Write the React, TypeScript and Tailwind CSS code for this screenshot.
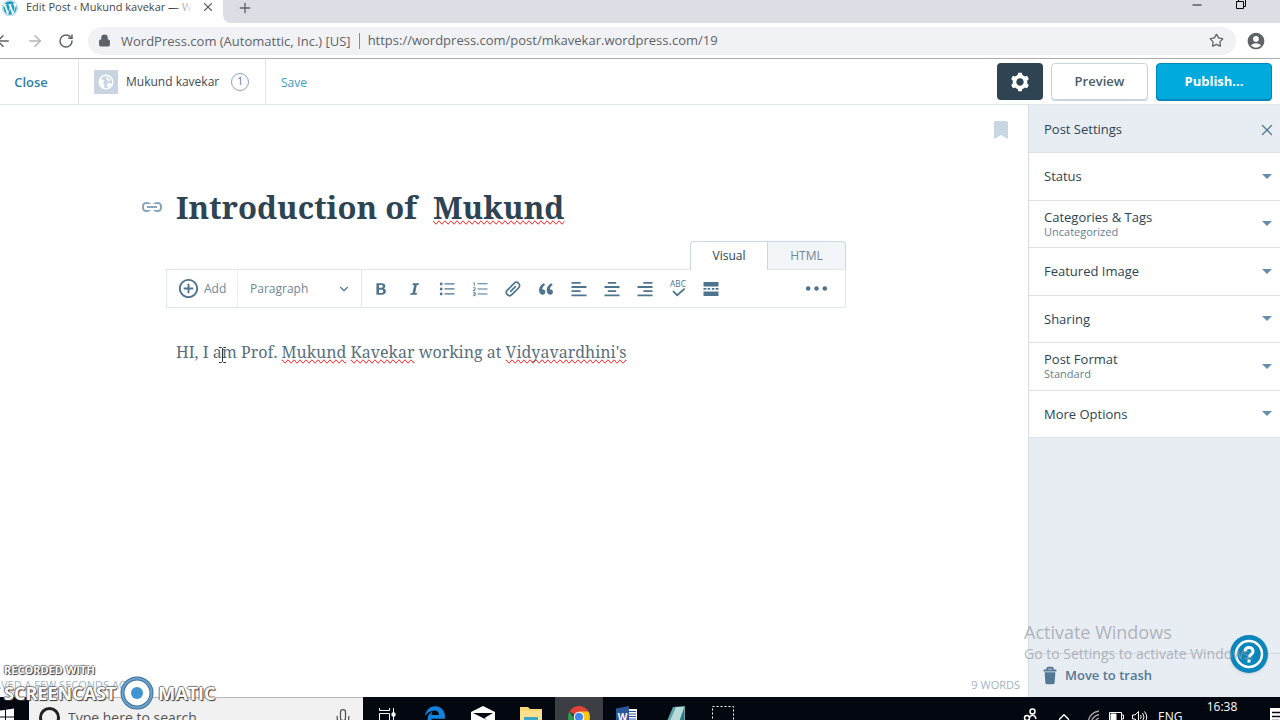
import { useState } from 'react';
import type { ReactNode } from 'react';
import {
  ArrowLeft,
  ArrowRight,
  ChevronDown,
  ChevronUp,
  Lock,
  Mic,
  Minus,
  Plus,
  RotateCw,
  Star,
  X,
} from 'lucide-react';
import { FaEdgeLegacy, FaWordpress } from 'react-icons/fa';
import { MdAccountCircle } from 'react-icons/md';

interface Section {
  title: string;
  value?: string;
}

const sections: Section[] = [
  { title: 'Status' },
  { title: 'Categories & Tags', value: 'Uncategorized' },
  { title: 'Featured Image' },
  { title: 'Sharing' },
  { title: 'Post Format', value: 'Standard' },
  { title: 'More Options' },
];

const QUOTE =
  'M11.192 15.757c0-.88-.23-1.618-.69-2.217-.326-.412-.768-.683-1.327-.812-.55-.128-1.07-.137-1.54-.028-.16-.95.1-1.956.76-3.022.66-1.065 1.515-1.867 2.558-2.403L9.373 5c-.8.396-1.56.898-2.26 1.505-.71.607-1.34 1.305-1.9 2.094s-.98 1.68-1.25 2.69-.346 2.04-.217 3.1c.168 1.4.62 2.52 1.356 3.35.735.84 1.652 1.26 2.748 1.26.965 0 1.766-.29 2.4-.878.628-.576.94-1.365.94-2.368z';

function Gridicon({ size = 20, children }: { size?: number; children: ReactNode }) {
  return (
    <svg width={size} height={size} viewBox="0 0 24 24" fill="currentColor" aria-hidden="true">
      {children}
    </svg>
  );
}

function Misspelled({ children }: { children: ReactNode }) {
  return <span className="[text-decoration-line:spelling-error]">{children}</span>;
}

const tools: { label: string; icon: ReactNode }[] = [
  {
    label: 'Bold',
    icon: (
      <Gridicon>
        <path
          fillRule="evenodd"
          d="M6.5 5H13c2.6 0 4.2 1.2 4.2 3.4 0 1.5-.8 2.6-2.2 3 1.8.3 2.9 1.6 2.9 3.4 0 2.6-1.9 4.2-4.9 4.2H6.5zM9.6 7.3v3.3h2.7c1.2 0 1.8-.6 1.8-1.7s-.6-1.6-1.8-1.6zm0 5.500v3.9h2.9c1.4 0 2.2-.7 2.2-2s-.8-1.9-2.2-1.9z"
        />
      </Gridicon>
    ),
  },
  {
    label: 'Italic',
    icon: (
      <Gridicon>
        <path d="M10.5 5H18l-.4 2.2h-2.2l-2 9.6h2.2l-.4 2.2H7.5l.4-2.2h2.3l2-9.6H10z" />
      </Gridicon>
    ),
  },
  {
    label: 'Bulleted list',
    icon: (
      <Gridicon>
        <path d="M9 18.500h12v-1.400H9zm0-6h12v-1.400H9zm0-7.400v1.400h12V5.100z" />
        <circle cx="5" cy="6" r="1.700" />
        <circle cx="5" cy="12" r="1.700" />
        <circle cx="5" cy="18" r="1.700" />
      </Gridicon>
    ),
  },
  {
    label: 'Numbered list',
    icon: (
      <Gridicon>
        <path d="M9 18.500h12v-1.200H9zm0-6h12v-1.200H9zm0-7.400v1.200h12V5.100z" />
        <path
          d="M4 4.500h1.200v4M3.800 10.500h2.400v1.500l-2.200 1.800h2.400M3.800 16h2.400v4H3.800m0-2h2.400"
          fill="none"
          stroke="currentColor"
          strokeWidth="1"
        />
      </Gridicon>
    ),
  },
  {
    label: 'Insert link',
    icon: (
      <Gridicon>
        <g
          fill="none"
          stroke="currentColor"
          strokeWidth="2"
          strokeLinecap="round"
          transform="rotate(-45 12 12)"
        >
          <path d="M12.500 8.200H6.200a3.800 3.800 0 0 0 0 7.600h4.800" />
          <path d="M11.500 15.800h6.300a3.800 3.800 0 0 0 0-7.600H13" />
          <path d="M8 12h8" />
        </g>
      </Gridicon>
    ),
  },
  {
    label: 'Blockquote',
    icon: (
      <Gridicon>
        <path d={QUOTE} />
        <path d={QUOTE} transform="translate(9.124 0)" />
      </Gridicon>
    ),
  },
  {
    label: 'Align left',
    icon: (
      <Gridicon>
        <path d="M3 3.500h11v2.200H3zm0 5h18v2.200H3zm0 5h11v2.200H3zm0 5h18v2.200H3z" />
      </Gridicon>
    ),
  },
  {
    label: 'Align center',
    icon: (
      <Gridicon>
        <path d="M7 3.500h10v2.200H7zm-4 5h18v2.200H3zm4 5h10v2.200H7zm-4 5h18v2.200H3z" />
      </Gridicon>
    ),
  },
  {
    label: 'Align right',
    icon: (
      <Gridicon>
        <path d="M10 3.500h11v2.200H10zm-7 5h18v2.200H3zm7 5h11v2.200H10zm-7 5h18v2.200H3z" />
      </Gridicon>
    ),
  },
  {
    label: 'Proofread writing',
    icon: (
      <Gridicon>
        <text x="12" y="9" textAnchor="middle" fontSize="10">
          ABC
        </text>
        <path d="m6 14.500 5 5 9-8" fill="none" stroke="currentColor" strokeWidth="2.200" />
      </Gridicon>
    ),
  },
  {
    label: 'Insert read more',
    icon: (
      <Gridicon>
        <path d="M3 3.500h18v5.500H3zm0 7.300h3.500v2H3zm5 0h3v2H8zm5 0h3v2h-3zm4.500 0H21v2h-3.500zM3 15h18v5.500H3z" />
      </Gridicon>
    ),
  },
];

function BrowserChrome() {
  return (
    <header className="shrink-0 border-b border-[#a9abae] bg-white text-[#5f6368]">
      <div className="flex h-[23px] items-end justify-between bg-[#dcdee5]">
        <div className="flex h-full">
          <div className="flex w-[223px] items-start gap-2 overflow-hidden bg-white pl-0.5">
            <FaWordpress size={16} className="shrink-0 text-[#1e9cc4]" />
            <div className="relative h-4 min-w-0 flex-1 text-[11px] leading-3.5 whitespace-nowrap text-[#45484c]">
              Edit Post ‹ Mukund kavekar — W
              <div className="absolute inset-y-0 right-0 w-5 bg-linear-to-r from-transparent to-white" />
            </div>
            <button aria-label="Close tab" className="mr-2 shrink-0">
              <X size={14} />
            </button>
          </div>
          <div className="h-full bg-white">
            <button
              aria-label="New tab"
              className="flex h-full w-11 items-start justify-center rounded-bl-lg bg-[#dcdee5]"
            >
              <Plus size={16} />
            </button>
          </div>
        </div>
        <div className="flex h-full items-start gap-8 pr-8.5 text-black">
          <button aria-label="Minimize">
            <Minus size={14} strokeWidth={1.5} className="-mt-0.5" />
          </button>
          <button aria-label="Restore">
            <svg width="10" height="10" viewBox="0 0 10 10" fill="none" stroke="currentColor">
              <path d="M.5 1.500h7v7h-7zM2.500 1.500v-2h7v7h-2" />
            </svg>
          </button>
        </div>
      </div>
      <div className="flex h-[35px] items-center">
        <button aria-label="Back" className="w-5 overflow-hidden">
          <ArrowLeft size={18} className="-ml-1.5" />
        </button>
        <button aria-label="Forward" className="ml-1.5 text-[#b4b6b9]">
          <ArrowRight size={18} />
        </button>
        <button aria-label="Reload" className="ml-3.5">
          <RotateCw size={16} strokeWidth={2.2} />
        </button>
        <div className="ml-3.5 flex h-7 flex-1 items-center rounded-full bg-[#f1f2f5] pr-3 pl-2.5 text-[13px]">
          <Lock size={13} fill="currentColor" className="shrink-0" />
          <span className="ml-2.5 border-r border-[#8a8d91] pr-2 leading-4 whitespace-nowrap">
            WordPress.com (Automattic, Inc.) [US]
          </span>
          <input
            aria-label="Address"
            className="ml-2 min-w-0 flex-1 bg-transparent outline-none"
            defaultValue="https://wordpress.com/post/mkavekar.wordpress.com/19"
          />
          <button aria-label="Bookmark this page">
            <Star size={15} />
          </button>
        </div>
        <button aria-label="Profile" className="mr-3.5 ml-2.5">
          <MdAccountCircle size={20} />
        </button>
      </div>
    </header>
  );
}

function EditorHeader() {
  return (
    <div className="flex h-[46px] shrink-0 items-stretch border-b border-[#dfe6ec] text-[13px]">
      <button className="w-[79px] border-r border-[#dfe6ec] pt-0.5 pr-4 font-semibold text-[#2e7fa8]">
        Close
      </button>
      <a
        href="#site"
        className="flex w-[187px] items-center border-r border-[#dfe6ec] pl-[15px] text-xs text-[#3d4a55]"
      >
        <span className="flex size-6 items-center justify-center bg-[#c8d4df] text-white">
          <Gridicon size={18}>
            <circle cx="12" cy="12" r="9" fill="none" stroke="currentColor" strokeWidth="2" />
            <path d="M4 8c3 0 5 1 6 3l-2 2 2 3-1 4c-4-2-6-7-5-12zm9-5 1 4 4 1-1 3-3-1-2-3zM15 13l4 1-1 4-4 1-1-3z" />
          </Gridicon>
        </span>
        <span className="ml-2 whitespace-nowrap">Mukund kavekar</span>
        <span className="ml-3 flex size-[18px] items-center justify-center rounded-full border border-[#87a6bc] text-[11px] text-[#5b7a90]">
          1
        </span>
      </a>
      <button className="px-[15px] pt-0.5 text-xs text-[#3a9dc4]">Save</button>
      <div className="ml-auto flex items-center gap-2 pr-2">
        <button
          aria-label="Post settings"
          className="flex h-[37px] w-[46px] items-center justify-center rounded bg-[#2e4453] text-white"
        >
          <Gridicon size={22}>
            <path d="M20 12c0-.568-.06-1.122-.174-1.656l1.834-1.612-2-3.464-2.322.786c-.82-.736-1.787-1.308-2.86-1.657L14 2h-4l-.48 2.396c-1.070.35-2.040.92-2.858 1.657L4.340 5.268l-2 3.464 1.834 1.612C4.060 10.878 4 11.432 4 12s.06 1.122.174 1.656L2.340 15.268l2 3.464 2.322-.786c.82.736 1.787 1.308 2.860 1.657L10 22h4l.48-2.396c1.070-.35 2.038-.92 2.858-1.657l2.322.786 2-3.464-1.834-1.613c.113-.535.174-1.090.174-1.656zm-8 4c-2.210 0-4-1.790-4-4s1.790-4 4-4 4 1.790 4 4-1.790 4-4 4z" />
          </Gridicon>
        </button>
        <button className="h-[37px] w-[97px] rounded border border-[#c8d3dc] font-semibold text-[#4a5b68] shadow-[0_1px_0_#c8d3dc]">
          Preview
        </button>
        <button className="h-[37px] w-[116px] rounded border border-[#0087be] bg-[#00aadc] font-bold text-white shadow-[0_1px_0_#0087be]">
          Publish...
        </button>
      </div>
    </div>
  );
}

function Editor() {
  const [mode, setMode] = useState<'visual' | 'html'>('visual');

  return (
    <main className="relative flex min-w-0 flex-1 flex-col">
      <button aria-label="Stick to front page" className="mt-4 mr-5 self-end text-[#c8d7e1]">
        <svg width="14" height="18" viewBox="0 0 14 18" fill="currentColor">
          <path d="M1.500 0h11A1.500 1.500 0 0 1 14 1.500V18l-7-4-7 4V1.500A1.500 1.500 0 0 1 1.500 0z" />
        </svg>
      </button>

      <div className="w-full flex-1 pr-4">
        <div className="mx-auto w-full max-w-[680px]">
          <div className="relative mt-11 px-2.5">
            <button
              aria-label="Edit permalink"
              className="absolute top-3 right-full mr-0.5 text-[#87a6bc]"
            >
              <Gridicon size={24}>
                <path d="M17 13H7v-2h10v2zm1-6h-1c-1.630 0-3.065.792-3.977 2H18c1.103 0 2 .897 2 2v2c0 1.103-.897 2-2 2h-4.977c.913 1.208 2.347 2 3.977 2h1c2.210 0 4-1.790 4-4v-2c0-2.210-1.790-4-4-4zM2 11v2c0 2.210 1.790 4 4 4h1c1.630 0 3.065-.792 3.977-2H6c-1.103 0-2-.897-2-2v-2c0-1.103.897-2 2-2h4.977C10.065 7.792 8.630 7 7 7H6c-2.210 0-4 1.790-4 4z" />
              </Gridicon>
            </button>
            <h1
              contentEditable
              suppressContentEditableWarning
              spellCheck={false}
              className="font-['Noto_Serif',serif] text-[31px] leading-12 font-bold whitespace-pre-wrap text-[#2e4453] outline-none"
            >
              Introduction of{'  '}
              <Misspelled>Mukund</Misspelled>
            </h1>
          </div>

          <div className="mt-2.5 flex justify-end text-xs" role="tablist">
            <button
              role="tab"
              aria-selected={mode === 'visual'}
              onClick={() => setMode('visual')}
              className="z-10 -mb-px h-[29px] w-[78px] rounded-tl border border-b-0 border-[#c8d7e1] bg-white text-[#2e4453]"
            >
              Visual
            </button>
            <button
              role="tab"
              aria-selected={mode === 'html'}
              onClick={() => setMode('html')}
              className="h-7 w-[78px] rounded-tr border border-b-0 border-l-0 border-[#c8d7e1] bg-[#f3f6f8] text-[#6f8796]"
            >
              HTML
            </button>
          </div>
          <div className="flex h-[39px] items-stretch border border-[#dfe6ec] text-xs text-[#4f748e]">
            <button className="flex w-[71px] items-center gap-1 border-r border-[#e9eff3] pl-2.5 text-[#6f8796]">
              <Gridicon size={23}>
                <path
                  className="text-[#4f748e]"
                  fill="currentColor"
                  d="M12 4c4.410 0 8 3.590 8 8s-3.590 8-8 8-8-3.590-8-8 3.590-8 8-8m0-2C6.477 2 2 6.477 2 12s4.477 10 10 10 10-4.477 10-10S17.523 2 12 2zm5 9h-4V7h-2v4H7v2h4v4h2v-4h4v-2z"
                />
              </Gridicon>
              Add
            </button>
            <div className="relative flex w-[124px] items-center border-r border-[#dfe6ec]">
              <select
                aria-label="Text style"
                className="h-full w-full appearance-none bg-transparent pl-3 text-[#6f8796] outline-none"
              >
                <option>Paragraph</option>
                <option>Heading 1</option>
                <option>Heading 2</option>
              </select>
              <ChevronDown size={14} className="pointer-events-none absolute right-2.5" />
            </div>
            <div className="flex flex-1 items-center pl-0.5">
              {tools.map((tool) => (
                <button
                  key={tool.label}
                  aria-label={tool.label}
                  className="flex h-full w-[33px] items-center justify-center"
                >
                  {tool.icon}
                </button>
              ))}
              <button aria-label="More" className="mr-4 ml-auto">
                <Gridicon size={25}>
                  <circle cx="4" cy="12" r="2.200" />
                  <circle cx="12" cy="12" r="2.200" />
                  <circle cx="20" cy="12" r="2.200" />
                </Gridicon>
              </button>
            </div>
          </div>

          <div
            role="textbox"
            aria-label="Post content"
            contentEditable
            suppressContentEditableWarning
            spellCheck={false}
            className="mt-7 px-2.5 font-['Noto_Serif',serif] text-base leading-8 text-[#596f7d] outline-none"
          >
            HI, I am Prof. <Misspelled>Mukund</Misspelled> <Misspelled>Kavekar</Misspelled> working
            at <Misspelled>Vidyavardhini's</Misspelled>
          </div>
        </div>
      </div>

      {/* Text cursor */}
      <svg
        className="pointer-events-none absolute top-[242px] left-[218px]"
        width="9"
        height="16"
        viewBox="0 0 9 16"
        fill="none"
        stroke="#333"
        aria-hidden="true"
      >
        <path d="M1 .5h2.500l1 1 1-1H8M4.500 1.500v13M1 15.500h2.500l1-1 1 1H8" />
      </svg>

      <div className="flex items-center justify-between pr-2 pb-1 text-[11px] leading-4 text-[#a0b3c2]">
        <span className="-ml-3">SAVED A FEW SECONDS AGO</span>
        <span>9 WORDS</span>
      </div>
    </main>
  );
}

function Sidebar() {
  return (
    <aside className="flex w-[252px] shrink-0 flex-col border-l border-[#d5dee6] bg-[#e8ecf3] text-[13px] text-[#2e4453]">
      <div className="flex h-[47px] items-center justify-between pt-0.5 pr-1 pl-[15px]">
        <h2>Post Settings</h2>
        <button aria-label="Close settings" className="text-[#4f748e]">
          <X size={18} strokeWidth={1.6} />
        </button>
      </div>
      <div className="grid h-[286px] grid-rows-6 border-b border-[#dfe3e8]">
        {sections.map((section) => (
          <button
            key={section.title}
            className="flex items-center justify-between border-t border-[#dfe3e8] bg-white pr-2 pl-[15px] text-left"
          >
            <span className="leading-4">
              <span className="block font-medium">{section.title}</span>
              {section.value && (
                <span className="block text-[11px] leading-3.5 text-[#668090]">{section.value}</span>
              )}
            </span>
            <svg width="10" height="5" viewBox="0 0 10 5" fill="#668eaa" aria-hidden="true">
              <path d="M0 0h10L5 5z" />
            </svg>
          </button>
        ))}
      </div>
      <div className="mt-auto border-t border-[#cfd8e0]">
        <button className="flex h-[43px] items-center gap-1 pl-2.5 font-semibold text-[#537994]">
          <Gridicon size={22}>
            <path d="M6.187 8h11.625l-.695 11.125C17.050 20.180 16.177 21 15.120 21H8.880c-1.057 0-1.930-.82-1.997-1.875L6.187 8zM19 5v2H5V5h3V4c0-1.105.895-2 2-2h4c1.105 0 2 .895 2 2v1h3zm-9 0h4V4h-4v1z" />
          </Gridicon>
          Move to trash
        </button>
      </div>
    </aside>
  );
}

function TaskIcon({ label, active, children }: { label: string; active?: boolean; children: ReactNode }) {
  return (
    <button
      aria-label={label}
      className={`flex h-10 w-12 shrink-0 items-center justify-center ${active ? 'bg-[#3b3e43]' : ''}`}
    >
      {children}
    </button>
  );
}

function Taskbar() {
  return (
    <footer className="h-[23px] shrink-0 overflow-hidden bg-[#03070f] text-white">
      <div className="flex h-10 items-center">
        <button aria-label="Start" className="w-[29px] shrink-0">
          <svg width="16" height="18" viewBox="0 0 16 18" fill="currentColor">
            <path d="M0 2.500 5 2v6.500H0zM6 1.800 14 .5v8H6zM0 9.500h5V16l-5-.5zM6 9.500h8v8l-8-1.300z" />
          </svg>
        </button>
        <label className="flex h-10 w-[334px] shrink-0 items-center border-t border-[#b8b8b8] bg-[#f1f1f1] text-[#4a4a4a]">
          <span className="ml-2.5 size-[21px] rounded-full border-3 border-[#222]" />
          <input
            type="text"
            aria-label="Search"
            placeholder="Type here to search"
            className="ml-2 min-w-0 flex-1 bg-transparent text-sm outline-none placeholder:text-[#555]"
          />
          <Mic size={20} className="mr-2.5 text-[#555]" strokeWidth={1.5} />
        </label>

        <TaskIcon label="Task view">
          <svg width="18" height="18" viewBox="0 0 18 18" fill="none" stroke="currentColor">
            <path d="M1.500 0v2.500h10V0M1.500 5.500h10v7h-10zM1.500 18v-2.500h10V18M15.500 0v18" />
            <path d="M14 5h3v3h-3z" fill="currentColor" />
          </svg>
        </TaskIcon>
        <TaskIcon label="Microsoft Edge">
          <FaEdgeLegacy size={22} className="text-[#1283dc]" />
        </TaskIcon>
        <TaskIcon label="Mail">
          <svg width="24" height="22" viewBox="0 0 24 22" fill="#fff">
            <path d="M12 0 24 6v16H0V6z" />
            <path d="M2 7h20l-8.500 5L16 14z" fill="#03070f" />
          </svg>
        </TaskIcon>
        <TaskIcon label="File Explorer">
          <svg width="22" height="20" viewBox="0 0 22 20">
            <path d="M0 0h8l2 2h12v18H0z" fill="#f8d775" />
            <path d="M0 4h22v16H0z" fill="#fbe18d" />
            <path d="M4 10h14v10h-4v-5H8v5H4z" fill="#3aa6c9" />
          </svg>
        </TaskIcon>
        <TaskIcon label="Google Chrome" active>
          <svg width="22" height="22" viewBox="0 0 22 22">
            <path d="M11 11 1.500 5.500A11 11 0 0 1 20.500 5.500z" fill="#e04434" />
            <path d="M11 11V5.500h9.500A11 11 0 0 1 11 22z" fill="#fbc613" />
            <path d="M11 11v11A11 11 0 0 1 1.500 5.500L6.200 13.700z" fill="#2ba14b" />
            <circle cx="11" cy="11" r="5.300" fill="#fff" />
            <circle cx="11" cy="11" r="4.200" fill="#4286f4" />
          </svg>
        </TaskIcon>
        <TaskIcon label="Word">
          <svg width="22" height="22" viewBox="0 0 22 22">
            <path d="M12 3h9v16h-9z" fill="#fff" />
            <path d="M13 5.500h7M13 8h7M13 10.500h7M13 13h7" stroke="#2b579a" />
            <path d="M0 2.500 13 0v22L0 19.500z" fill="#2b579a" />
            <text x="6.500" y="15" textAnchor="middle" fontSize="10" fontWeight="700" fill="#fff">
              W
            </text>
          </svg>
        </TaskIcon>
        <TaskIcon label="Notes">
          <svg width="22" height="22" viewBox="0 0 22 22">
            <path d="M9 1 21 0v22H0z" fill="#5fa3a6" />
            <path d="M12 1h8l-7 21H3z" fill="#b9dcda" />
            <path d="m20 3-7 19h7z" fill="#33757d" />
          </svg>
        </TaskIcon>
        <TaskIcon label="Screen recorder">
          <svg width="22" height="22" viewBox="0 0 22 22" fill="none" stroke="#fff" strokeDasharray="2 2">
            <path d="M.5.500h21v21H.5z" />
          </svg>
        </TaskIcon>

        <div className="ml-auto flex h-10 shrink-0 items-center text-xs">
          <svg width="14" height="18" viewBox="0 0 14 18" fill="none" stroke="currentColor" strokeWidth="1.500">
            <circle cx="9.500" cy="3.500" r="2.500" />
            <circle cx="4" cy="10" r="2.500" />
            <path d="M6.500 9.500C8 6.500 12 6 13 11M.8 17c.5-5 5.500-5 6.500 0" />
          </svg>
          <ChevronUp size={18} className="ml-4.5" />
          <svg className="ml-3.5 text-[#aaa]" width="14" height="14" viewBox="0 0 14 14" fill="none" stroke="currentColor" strokeWidth="1.300">
            <path d="M1 12C2 6 6 2 12 1M4 12.500c1-4 4-7 8-8M7.500 13c.5-2.500 2-4 4.500-5" />
          </svg>
          <svg className="ml-2" width="15" height="10" viewBox="0 0 15 10" fill="none" stroke="currentColor">
            <path d="M.5.500h12v9H.5zM13 3h1.500v4H13" />
            <path d="M2 2h5v6H2z" fill="currentColor" />
          </svg>
          <svg className="ml-2" width="16" height="14" viewBox="0 0 16 14" fill="none" stroke="currentColor">
            <path d="M.5 5h2.500l3.500-3.500v11L3 9H.5zM8.500 5q1.500 2 0 4M10.500 3q3 4 0 8M12.500 1.500q4.500 5.500 0 11" />
          </svg>
          <span className="ml-2.5 w-6">ENG</span>
          <span className="ml-6 flex h-10 w-8 flex-col items-center pt-0.5 leading-4">
            <span>16:38</span>
          </span>
          <svg className="ml-8 -mr-1" width="14" height="18" viewBox="0 0 14 18">
            <path d="M0 0h14v18H0z" fill="#fff" />
            <path d="M2 4.500h12M2 8.500h12M2 12.500h7" stroke="#03070f" strokeWidth="1.500" />
          </svg>
        </div>
      </div>
    </footer>
  );
}

export default function App() {
  return (
    <div className="relative flex h-screen flex-col overflow-hidden bg-white font-['Open_Sans','Noto_Sans',sans-serif]">
      <BrowserChrome />
      <EditorHeader />
      <div className="flex min-h-0 flex-1">
        <Editor />
        <Sidebar />
      </div>
      <Taskbar />

      <button
        aria-label="Help"
        className="absolute right-3 bottom-[47px] rounded-full bg-[#0a86bd] shadow"
      >
        <svg width="38" height="38" viewBox="0 0 38 38" fill="none" stroke="#fff">
          <circle cx="19" cy="19" r="13" strokeWidth="2.500" />
          <path d="M15 16.500c0-5.500 8-5.500 8 0 0 3-4 3-4 6" strokeWidth="3" />
          <path d="M19 24.500v3" strokeWidth="3" />
        </svg>
      </button>

      {/* Windows activation notice */}
      <div className="pointer-events-none absolute right-0 bottom-14 w-[256px] text-[#9a9fa5]/75">
        <p className="text-lg leading-6">Activate Windows</p>
        <p className="text-sm leading-5 whitespace-nowrap">Go to Settings to activate Windows.</p>
      </div>

      {/* Recorder watermark */}
      <div className="pointer-events-none absolute bottom-2.5 left-1 font-bold text-white [text-shadow:1px_1px_1px_#333,-1px_0_1px_#777,0_-1px_1px_#777]">
        <p className="text-[11px] leading-3">RECORDED WITH</p>
        <div className="flex items-center gap-1 text-lg leading-8">
          SCREENCAST
          <svg width="34" height="34" viewBox="0 0 34 34" fill="none">
            <circle cx="17" cy="17" r="14.500" fill="#fff" stroke="#3e6f98" strokeWidth="4" />
            <circle cx="17" cy="17" r="14.500" stroke="#6ba3cf" strokeWidth="2" />
            <circle cx="17" cy="17" r="6" fill="#3f94d1" />
          </svg>
          MATIC
        </div>
      </div>
    </div>
  );
}
